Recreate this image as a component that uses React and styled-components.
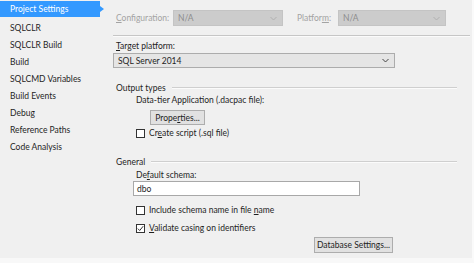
import React from "react";
import styled, { createGlobalStyle } from "styled-components";

const GlobalStyle = createGlobalStyle`
  html, body {
    margin: 0;
    padding: 0;
    background: #f0f0f0;
  }
  body {
    font-family: Lato, "Noto Sans", "Liberation Sans", sans-serif;
    font-size: 8.5px;
    color: #1e1e1e;
  }
`;

const Window = styled.div`
  width: 474px;
  height: 263px;
  display: flex;
  background: #f0f0f0;
  overflow: hidden;
  box-sizing: border-box;
  border-right: 2px solid #fafafa;
  border-bottom: 5px solid #f8f8f8;
`;

const Sidebar = styled.ul`
  list-style: none;
  margin: 0;
  padding: 1px 0 0;
  width: 104px;
  flex-shrink: 0;
`;

const NavItem = styled.li`
  height: ${(p) => (p.$active ? "16px" : "17px")};
  margin-bottom: ${(p) => (p.$active ? "2px" : "0")};
  padding-left: 10px;
  display: flex;
  align-items: center;
  white-space: nowrap;
  color: ${(p) => (p.$active ? "#fff" : "#1e1e1e")};
  background: ${(p) => (p.$active ? "#3399ff" : "transparent")};
  clip-path: ${(p) =>
    p.$active
      ? "polygon(0 0, 100px 0, 100px 5px, 104px 8px, 100px 11px, 100px 100%, 0 100%)"
      : "none"};
`;

const Main = styled.div`
  flex: 1;
  padding: 10px 0 0 9px;
  display: flex;
  flex-direction: column;
  align-items: flex-start;
`;

const TopRow = styled.div`
  display: flex;
  align-items: center;
  height: 16px;
`;

const DimLabel = styled.span`
  color: #a3a3a3;
  width: ${(p) => p.$w}px;
  margin-left: ${(p) => p.$ml || 0}px;
  white-space: nowrap;
`;

const Combo = styled.div`
  box-sizing: border-box;
  width: ${(p) => p.$w}px;
  height: ${(p) => p.$h || 16}px;
  margin-top: ${(p) => p.$mt || 0}px;
  display: flex;
  align-items: center;
  justify-content: space-between;
  padding: 0 5px 0 4px;
  background: ${(p) => (p.$disabled ? "#cccccc" : "#e5e5e5")};
  border: 1px solid ${(p) => (p.$disabled ? "#c4c4c4" : "#acacac")};
  color: ${(p) => (p.$disabled ? "#8c8c8c" : "#1e1e1e")};
  white-space: nowrap;
`;

const Chevron = ({ color }) => (
  <svg width="7" height="5" viewBox="0 0 7 5">
    <path d="M0.5 1 L3.5 4 L6.5 1" fill="none" stroke={color} strokeWidth="1" />
  </svg>
);

const Divider = styled.div`
  align-self: stretch;
  margin: 9px 2px 0 0;
  border-top: 1px solid #c6c6c6;
  border-bottom: 1px solid #fbfbfb;
`;

const FieldLabel = styled.div`
  height: 12px;
  line-height: 12px;
  margin-top: ${(p) => p.$mt || 0}px;
  margin-left: ${(p) => p.$ml || 3}px;
  white-space: nowrap;
`;

const GroupHeader = styled.div`
  align-self: stretch;
  display: flex;
  align-items: center;
  height: 12px;
  margin: ${(p) => p.$mt}px 15px 0 3px;
  white-space: nowrap;

  &::after {
    content: "";
    flex: 1;
    margin-left: 6px;
    border-top: 1px solid #cfcfcf;
    border-bottom: 1px solid #fbfbfb;
  }
`;

const Button = styled.button`
  box-sizing: border-box;
  font: inherit;
  color: #1e1e1e;
  height: ${(p) => p.$h}px;
  width: ${(p) => p.$w}px;
  margin: ${(p) => p.$mt}px 0 0 ${(p) => p.$ml}px;
  padding: 0;
  background: #e1e1e1;
  border: 1px solid #adadad;
  border-radius: 0;
  white-space: nowrap;
`;

const CheckRow = styled.label`
  display: flex;
  align-items: center;
  height: 12px;
  margin: ${(p) => p.$mt}px 0 0 23px;
  white-space: nowrap;
`;

const Box = styled.span`
  box-sizing: border-box;
  width: 9px;
  height: 9px;
  border: 1px solid #333;
  background: #fff;
  margin-right: 4px;
  display: flex;
  align-items: center;
  justify-content: center;
`;

const TextInput = styled.div`
  box-sizing: border-box;
  width: 227px;
  height: 15px;
  margin-left: 20px;
  padding-left: 3px;
  display: flex;
  align-items: center;
  background: #fff;
  border: 1px solid #a8a8a8;
`;

const U = styled.span`
  text-decoration: underline;
`;

const navItems = [
  "Project Settings",
  "SQLCLR",
  "SQLCLR Build",
  "Build",
  "SQLCMD Variables",
  "Build Events",
  "Debug",
  "Reference Paths",
  "Code Analysis",
];

const Checkbox = ({ checked, children, mt }) => (
  <CheckRow $mt={mt}>
    <Box>
      {checked && (
        <svg width="7" height="7" viewBox="0 0 7 7">
          <path d="M0.8 3.6 L2.7 5.5 L6.2 1.2" fill="none" stroke="#333" strokeWidth="1" />
        </svg>
      )}
    </Box>
    <span>{children}</span>
  </CheckRow>
);

export default function App() {
  return (
    <>
      <GlobalStyle />
      <Window>
        <Sidebar>
          {navItems.map((item, i) => (
            <NavItem key={item} $active={i === 0}>
              {item}
            </NavItem>
          ))}
        </Sidebar>
        <Main>
          <TopRow>
            <DimLabel $w={57} $ml={3}>
              <U>C</U>onfiguration:
            </DimLabel>
            <Combo $w={110} $disabled>
              N/A
              <Chevron color="#b0b0b0" />
            </Combo>
            <DimLabel $w={41} $ml={14}>
              Platfor<U>m</U>:
            </DimLabel>
            <Combo $w={108} $disabled>
              N/A
              <Chevron color="#b0b0b0" />
            </Combo>
          </TopRow>
          <Divider />
          <FieldLabel $mt={3}>
            <U>T</U>arget platform:
          </FieldLabel>
          <Combo $w={282} $h={15} $mt={1}>
            SQL Server 2014
            <Chevron color="#444" />
          </Combo>
          <GroupHeader $mt={14}>Output types</GroupHeader>
          <FieldLabel $ml={23} $mt={0}>
            Data-tier Application (.dacpac file):
          </FieldLabel>
          <Button $w={55} $h={15} $mt={4} $ml={37}>
            Prope<U>r</U>ties...
          </Button>
          <Checkbox mt={2}>
            Cr<U>e</U>ate script (.sql file)
          </Checkbox>
          <GroupHeader $mt={17}>General</GroupHeader>
          <FieldLabel $ml={23} $mt={1}>
            De<U>f</U>ault schema:
          </FieldLabel>
          <TextInput>dbo</TextInput>
          <Checkbox mt={8}>
            Include schema name in file <U>n</U>ame
          </Checkbox>
          <Checkbox mt={6} checked>
            <U>V</U>alidate casing on identifiers
          </Checkbox>
          <Button $w={79} $h={16} $mt={3} $ml={201}>
            Database Settings...
          </Button>
        </Main>
      </Window>
    </>
  );
}
